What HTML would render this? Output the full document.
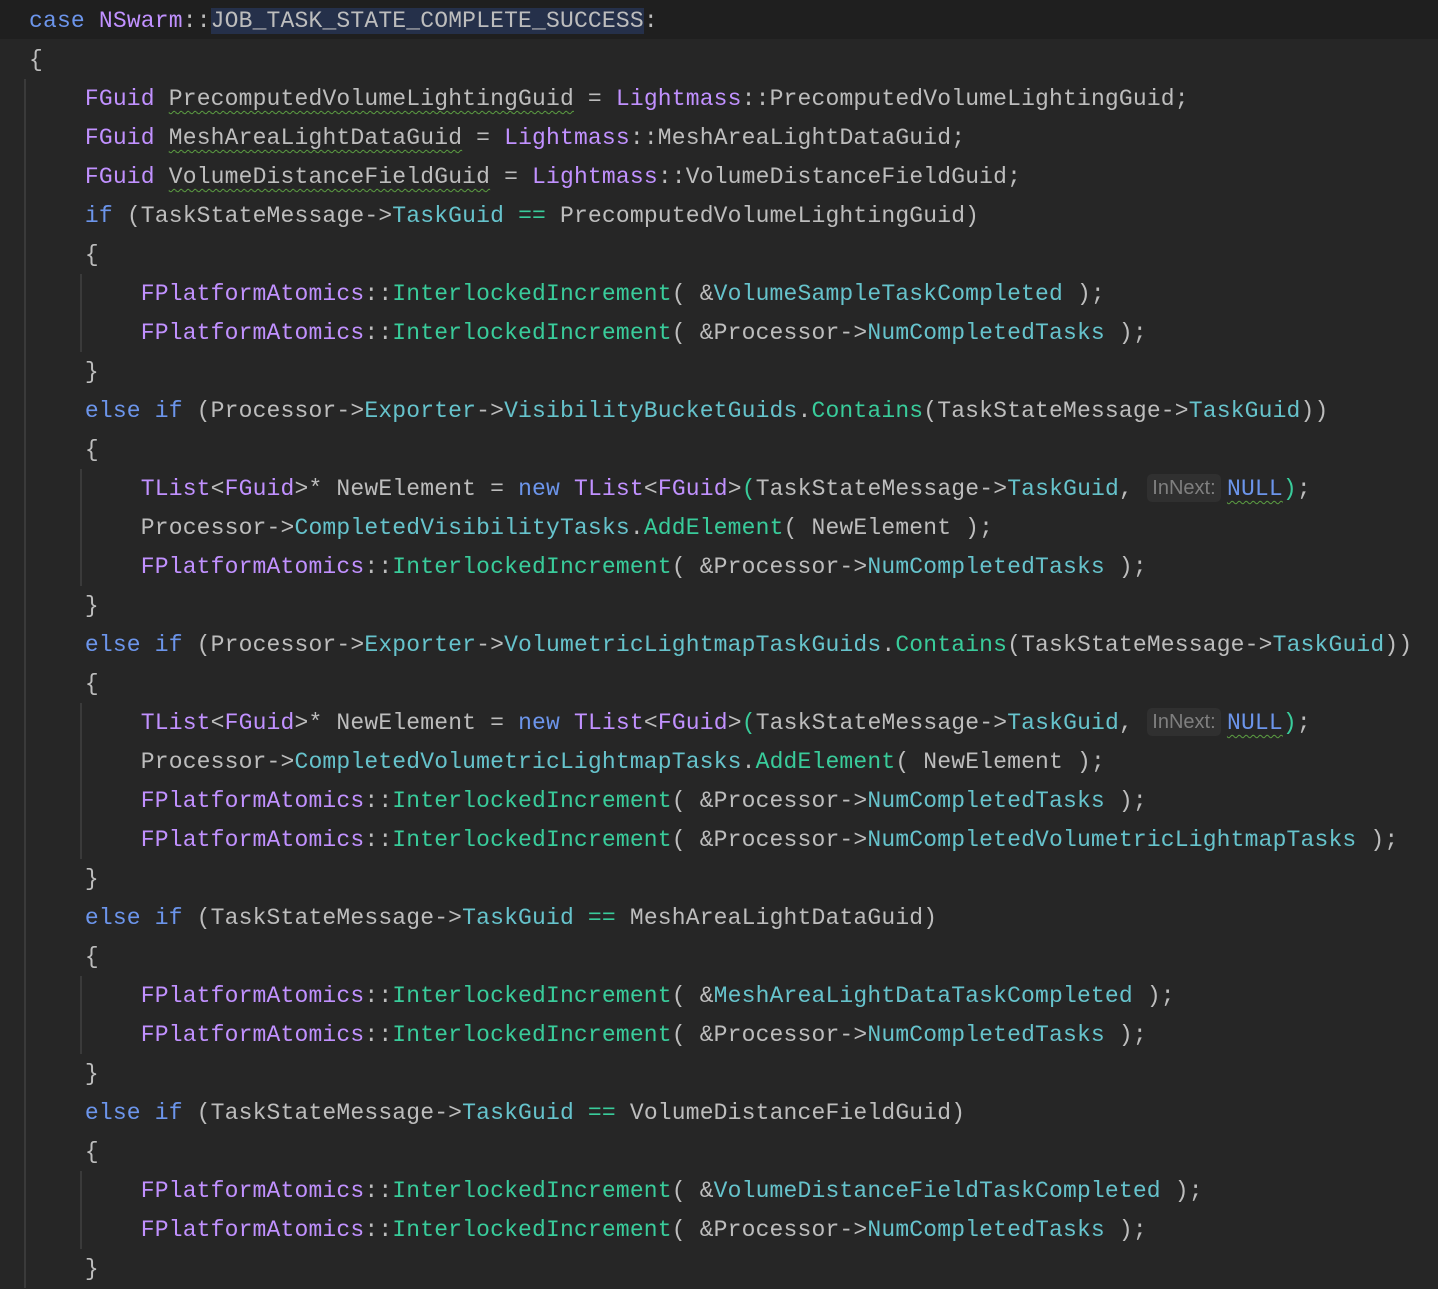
<!DOCTYPE html><html><head><meta charset="utf-8"><style>
body{margin:0;background:#262626;width:1438px;height:1288px;overflow:hidden;position:relative}
.code{position:absolute;left:29px;top:2px;font-family:"Liberation Mono",monospace;font-size:23px;line-height:39px;color:#bdbdbd;white-space:pre;letter-spacing:0.17px}
.l{height:39px}
.k{color:#6c95eb}.t{color:#c191ff}.f{color:#66c3cc}.m{color:#39cc9b}
.u{text-decoration:underline wavy #5c9e42;text-decoration-thickness:1px;text-underline-offset:5px}
.sel{background:#25304a}
.hint{display:inline-block;font-family:"Liberation Sans",sans-serif;font-size:20px;letter-spacing:0;color:#7f7f7f;background:#303030;border-radius:5px;line-height:28px;width:74px;text-align:center;margin:0 6px 0 14px;vertical-align:1px}
.cur{position:absolute;left:0;top:0;width:1438px;height:39px;background:#1f1f1f}
.g{position:absolute;width:2px;background:#3a3a3a}
</style></head><body>
<div class="cur"></div>
<div class="g" style="left:24px;top:79px;height:1209px"></div>
<div class="g" style="left:80px;top:274px;height:78px"></div>
<div class="g" style="left:80px;top:469px;height:117px"></div>
<div class="g" style="left:80px;top:703px;height:156px"></div>
<div class="g" style="left:80px;top:976px;height:78px"></div>
<div class="g" style="left:80px;top:1171px;height:78px"></div>
<div class="code"><div class="l"><span class="k">case</span> <span class="t">NSwarm</span>::<span class="sel">JOB_TASK_STATE_COMPLETE_SUCCESS</span>:</div><div class="l">{</div><div class="l">    <span class="t">FGuid</span> <span class="u">PrecomputedVolumeLightingGuid</span> = <span class="t">Lightmass</span>::PrecomputedVolumeLightingGuid;</div><div class="l">    <span class="t">FGuid</span> <span class="u">MeshAreaLightDataGuid</span> = <span class="t">Lightmass</span>::MeshAreaLightDataGuid;</div><div class="l">    <span class="t">FGuid</span> <span class="u">VolumeDistanceFieldGuid</span> = <span class="t">Lightmass</span>::VolumeDistanceFieldGuid;</div><div class="l">    <span class="k">if</span> (TaskStateMessage-&gt;<span class="f">TaskGuid</span> <span class="m">==</span> PrecomputedVolumeLightingGuid)</div><div class="l">    {</div><div class="l">        <span class="t">FPlatformAtomics</span>::<span class="m">InterlockedIncrement</span>( &amp;<span class="f">VolumeSampleTaskCompleted</span> );</div><div class="l">        <span class="t">FPlatformAtomics</span>::<span class="m">InterlockedIncrement</span>( &amp;Processor-&gt;<span class="f">NumCompletedTasks</span> );</div><div class="l">    }</div><div class="l">    <span class="k">else if</span> (Processor-&gt;<span class="f">Exporter</span>-&gt;<span class="f">VisibilityBucketGuids</span>.<span class="m">Contains</span>(TaskStateMessage-&gt;<span class="f">TaskGuid</span>))</div><div class="l">    {</div><div class="l">        <span class="t">TList</span>&lt;<span class="t">FGuid</span>&gt;* NewElement = <span class="k">new</span> <span class="t">TList</span>&lt;<span class="t">FGuid</span>&gt;<span class="m">(</span>TaskStateMessage-&gt;<span class="f">TaskGuid</span>,<span class="hint">InNext:</span><span class="k u">NULL</span><span class="m">)</span>;</div><div class="l">        Processor-&gt;<span class="f">CompletedVisibilityTasks</span>.<span class="m">AddElement</span>( NewElement );</div><div class="l">        <span class="t">FPlatformAtomics</span>::<span class="m">InterlockedIncrement</span>( &amp;Processor-&gt;<span class="f">NumCompletedTasks</span> );</div><div class="l">    }</div><div class="l">    <span class="k">else if</span> (Processor-&gt;<span class="f">Exporter</span>-&gt;<span class="f">VolumetricLightmapTaskGuids</span>.<span class="m">Contains</span>(TaskStateMessage-&gt;<span class="f">TaskGuid</span>))</div><div class="l">    {</div><div class="l">        <span class="t">TList</span>&lt;<span class="t">FGuid</span>&gt;* NewElement = <span class="k">new</span> <span class="t">TList</span>&lt;<span class="t">FGuid</span>&gt;<span class="m">(</span>TaskStateMessage-&gt;<span class="f">TaskGuid</span>,<span class="hint">InNext:</span><span class="k u">NULL</span><span class="m">)</span>;</div><div class="l">        Processor-&gt;<span class="f">CompletedVolumetricLightmapTasks</span>.<span class="m">AddElement</span>( NewElement );</div><div class="l">        <span class="t">FPlatformAtomics</span>::<span class="m">InterlockedIncrement</span>( &amp;Processor-&gt;<span class="f">NumCompletedTasks</span> );</div><div class="l">        <span class="t">FPlatformAtomics</span>::<span class="m">InterlockedIncrement</span>( &amp;Processor-&gt;<span class="f">NumCompletedVolumetricLightmapTasks</span> );</div><div class="l">    }</div><div class="l">    <span class="k">else if</span> (TaskStateMessage-&gt;<span class="f">TaskGuid</span> <span class="m">==</span> MeshAreaLightDataGuid)</div><div class="l">    {</div><div class="l">        <span class="t">FPlatformAtomics</span>::<span class="m">InterlockedIncrement</span>( &amp;<span class="f">MeshAreaLightDataTaskCompleted</span> );</div><div class="l">        <span class="t">FPlatformAtomics</span>::<span class="m">InterlockedIncrement</span>( &amp;Processor-&gt;<span class="f">NumCompletedTasks</span> );</div><div class="l">    }</div><div class="l">    <span class="k">else if</span> (TaskStateMessage-&gt;<span class="f">TaskGuid</span> <span class="m">==</span> VolumeDistanceFieldGuid)</div><div class="l">    {</div><div class="l">        <span class="t">FPlatformAtomics</span>::<span class="m">InterlockedIncrement</span>( &amp;<span class="f">VolumeDistanceFieldTaskCompleted</span> );</div><div class="l">        <span class="t">FPlatformAtomics</span>::<span class="m">InterlockedIncrement</span>( &amp;Processor-&gt;<span class="f">NumCompletedTasks</span> );</div><div class="l">    }</div></div>
</body></html>
